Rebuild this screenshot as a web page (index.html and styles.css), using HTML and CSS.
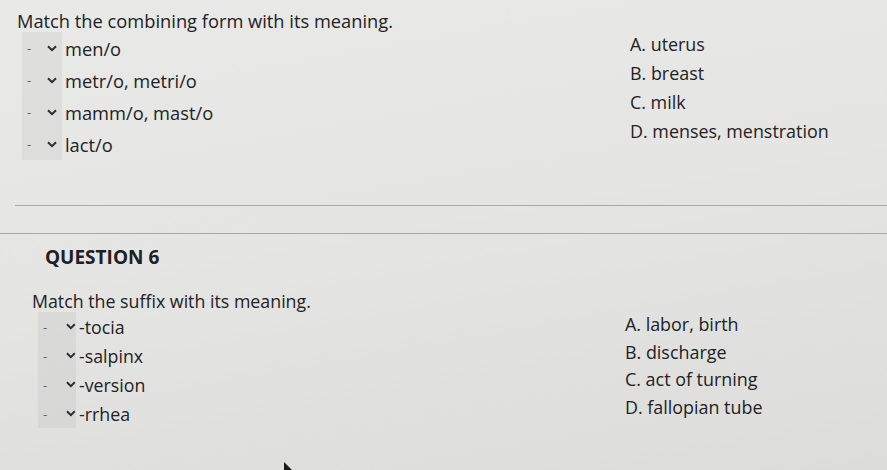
FILE: index.html
```html
<!DOCTYPE html>
<html>
<head>
<meta charset="utf-8">
<link rel="stylesheet" href="styles.css">
</head>
<body>
<div class="page">
  <section class="q1">
    <p class="prompt">Match the combining form with its meaning.</p>
    <div class="match">
      <div class="terms">
        <div class="row"><span class="dd"><span class="dash">-</span><svg class="chev" width="10" height="7" viewBox="0 0 10 7"><path d="M1 1.2 L5 5.2 L9 1.2" fill="none" stroke="#2b2b33" stroke-width="2"/></svg></span><span class="term">men/o</span></div>
        <div class="row"><span class="dd"><span class="dash">-</span><svg class="chev" width="10" height="7" viewBox="0 0 10 7"><path d="M1 1.2 L5 5.2 L9 1.2" fill="none" stroke="#2b2b33" stroke-width="2"/></svg></span><span class="term">metr/o, metri/o</span></div>
        <div class="row"><span class="dd"><span class="dash">-</span><svg class="chev" width="10" height="7" viewBox="0 0 10 7"><path d="M1 1.2 L5 5.2 L9 1.2" fill="none" stroke="#2b2b33" stroke-width="2"/></svg></span><span class="term">mamm/o, mast/o</span></div>
        <div class="row"><span class="dd"><span class="dash">-</span><svg class="chev" width="10" height="7" viewBox="0 0 10 7"><path d="M1 1.2 L5 5.2 L9 1.2" fill="none" stroke="#2b2b33" stroke-width="2"/></svg></span><span class="term">lact/o</span></div>
      </div>
      <ul class="options">
        <li>A. uterus</li>
        <li>B. breast</li>
        <li>C. milk</li>
        <li>D. menses, menstration</li>
      </ul>
    </div>
  </section>
  <hr class="rule rule-inner">
  <hr class="rule rule-outer">
  <section class="q2">
    <h2 class="qtitle">QUESTION 6</h2>
    <p class="prompt">Match the suffix with its meaning.</p>
    <div class="match">
      <div class="terms">
        <div class="row"><span class="dd"><span class="dash">-</span><svg class="chev" width="10" height="7" viewBox="0 0 10 7"><path d="M1 1.2 L5 5.2 L9 1.2" fill="none" stroke="#2b2b33" stroke-width="2"/></svg></span><span class="term">-tocia</span></div>
        <div class="row"><span class="dd"><span class="dash">-</span><svg class="chev" width="10" height="7" viewBox="0 0 10 7"><path d="M1 1.2 L5 5.2 L9 1.2" fill="none" stroke="#2b2b33" stroke-width="2"/></svg></span><span class="term">-salpinx</span></div>
        <div class="row"><span class="dd"><span class="dash">-</span><svg class="chev" width="10" height="7" viewBox="0 0 10 7"><path d="M1 1.2 L5 5.2 L9 1.2" fill="none" stroke="#2b2b33" stroke-width="2"/></svg></span><span class="term">-version</span></div>
        <div class="row"><span class="dd"><span class="dash">-</span><svg class="chev" width="10" height="7" viewBox="0 0 10 7"><path d="M1 1.2 L5 5.2 L9 1.2" fill="none" stroke="#2b2b33" stroke-width="2"/></svg></span><span class="term">-rrhea</span></div>
      </div>
      <ul class="options">
        <li>A. labor, birth</li>
        <li>B. discharge</li>
        <li>C. act of turning</li>
        <li>D. fallopian tube</li>
      </ul>
    </div>
  </section>
  <svg class="cursor" width="14" height="10" viewBox="0 0 14 10"><path d="M2 0 L12 10 L2 10 Z" fill="#1a1a1a"/></svg>
</div>
</body>
</html>
```
FILE: styles.css
```css
html, body {
  margin: 0;
  padding: 0;
}
body {
  width: 887px;
  height: 470px;
  overflow: hidden;
  font-family: "Open Sans", "DejaVu Sans", sans-serif;
  color: #222224;
  background: linear-gradient(170deg, #e9e9e7 0%, #e5e5e3 45%, #dcdcda 100%);
}
.page {
  position: relative;
  height: 470px;
}
.prompt {
  margin: 0;
  font-size: 18.3px;
  line-height: 22px;
  white-space: nowrap;
}
.q1 {
  padding: 10px 0 0 17px;
}
.match {
  display: flex;
}
.terms {
  display: flex;
  flex-direction: column;
  flex: none;
}
.row {
  display: flex;
  align-items: center;
  height: 32px;
  font-size: 18.3px;
  white-space: nowrap;
}
.dd {
  display: flex;
  align-items: center;
  flex: none;
  width: 40px;
  height: 100%;
  background: rgba(0, 0, 0, 0.045);
}
.dash {
  color: #5f5f5f;
  font-size: 13px;
  margin-left: 5px;
  width: 20px;
}
.chev {
  display: block;
}
.term {
  margin-left: 3px;
}
.options {
  list-style: none;
  margin: 0;
  padding: 0;
  font-size: 17.9px;
  white-space: nowrap;
}
.q1 .match {
  padding-left: 5px;
}
.q1 .terms {
  width: 608px;
}
.q1 .options {
  margin-top: -2px;
}
.q1 .options li {
  line-height: 29px;
}
.rule {
  border: 0;
  height: 1px;
  margin: 0;
  background: #a9a9a9;
}
.rule-inner {
  margin: 45px 0 0 15px;
}
.rule-outer {
  margin-top: 27px;
}
.q2 {
  padding-left: 32px;
}
.qtitle {
  margin: 12px 0 0 13px;
  font-size: 19px;
  line-height: 22px;
  font-weight: 700;
  color: #202022;
}
.q2 .prompt {
  margin-top: 22px;
  font-size: 17.8px;
}
.q2 .match {
  padding-left: 6px;
}
.q2 .terms {
  width: 587px;
}
.q2 .row {
  height: 29px;
  font-size: 17.8px;
}
.q2 .dd {
  width: 38px;
}
.q2 .dash {
  width: 24px;
}
.q2 .options {
  margin-top: -1px;
}
.q2 .options li {
  line-height: 27.5px;
}
.cursor {
  position: absolute;
  left: 282px;
  top: 462px;
}
```
